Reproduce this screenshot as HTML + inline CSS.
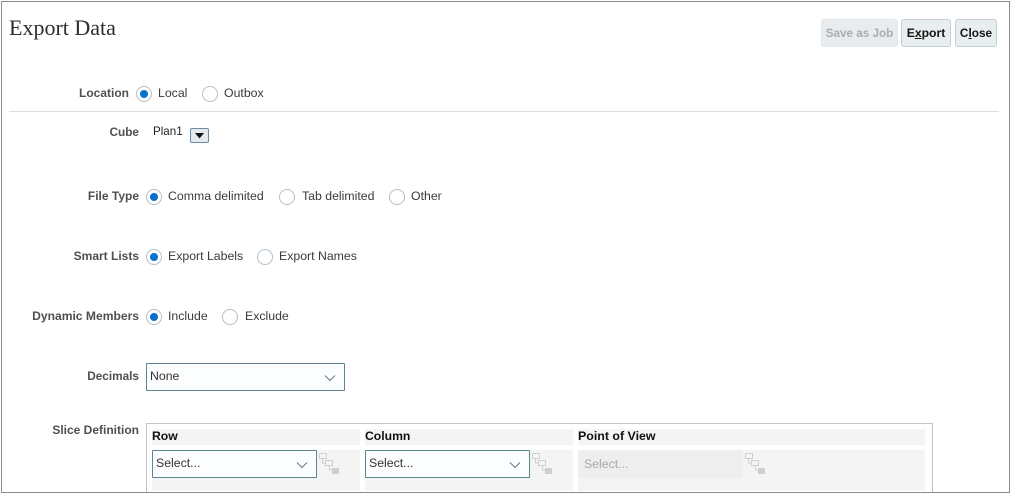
<!DOCTYPE html>
<html><head><meta charset="utf-8"><style>
html,body{margin:0;padding:0;background:#fff}
body{width:1011px;height:494px;position:relative;overflow:hidden;font-family:"Liberation Sans",sans-serif;font-size:12.3px;color:#3a3a3a}
.a{position:absolute;white-space:nowrap;line-height:16px}
.l{position:absolute;white-space:nowrap;line-height:16px;font-weight:bold;color:#4f4f4f;text-align:right;font-size:12px}
.r{position:absolute;width:14px;height:14px;border:1px solid #b3bfca;border-radius:50%;background:#fff}
.r.on::after{content:"";position:absolute;left:3px;top:3px;width:8px;height:8px;border-radius:50%;background:#0572ce}
.b{position:absolute;top:19px;height:26px;border:1px solid #c4ced7;border-radius:3px;background:#e8edf0;font-weight:bold;font-size:12px;line-height:26px;text-align:center;color:#161513;box-sizing:content-box}
.s{position:absolute;border:1px solid #5f8490;background:#fbfdfe;box-sizing:border-box;line-height:24px;padding-left:3px;color:#333;border-radius:1px}
.g{position:absolute;background:#f4f4f4}
.h{position:absolute;background:#f4f4f4;font-weight:bold;font-size:12.2px;line-height:14px;color:#111;height:16px;padding-left:0}
</style></head><body>
<div style="position:absolute;left:1px;top:1px;width:1007px;height:490px;border:1px solid #8c8c8c"></div>
<div class="a" style="left:9px;top:16px;font-family:'Liberation Serif',serif;font-size:22px;line-height:24px;color:#2f2d2b">Export Data</div>

<div class="b" style="left:821px;width:75px;background:#e8ecee;border-color:#e2e7ea;color:#a9adb0;font-size:11.7px;line-height:27px">Save as Job</div>
<div class="b" style="left:901px;width:48px;font-size:12.2px">E<u>x</u>port</div>
<div class="b" style="left:955px;width:40px;font-size:11.8px">C<u>l</u>ose</div>

<div class="l" style="right:882px;top:85px">Location</div>
<div class="r on" style="left:136px;top:86px"></div><div class="a" style="left:158px;top:85px">Local</div>
<div class="r" style="left:202px;top:86px"></div><div class="a" style="left:224px;top:85px">Outbox</div>
<div style="position:absolute;left:9px;top:111px;width:990px;height:1px;background:#d6dfe6"></div>

<div class="l" style="right:872px;top:124px;font-size:11.8px">Cube</div>
<div class="a" style="left:153px;top:124px;color:#222;font-size:11.6px">Plan1</div>
<div style="position:absolute;left:190px;top:128px;width:17px;height:13px;border:1px solid #6f8ba0;border-radius:2px;background:#e3e9ef"><svg width="17" height="13" style="display:block"><path d="M4 4h9l-4.500 5.500z" fill="#111"/></svg></div>

<div class="l" style="right:872px;top:188px">File Type</div>
<div class="r on" style="left:146px;top:189px"></div><div class="a" style="left:168px;top:188px">Comma delimited</div>
<div class="r" style="left:279px;top:189px"></div><div class="a" style="left:302px;top:188px">Tab delimited</div>
<div class="r" style="left:389px;top:189px"></div><div class="a" style="left:411px;top:188px">Other</div>

<div class="l" style="right:872px;top:248px">Smart Lists</div>
<div class="r on" style="left:146px;top:249px"></div><div class="a" style="left:168px;top:248px">Export Labels</div>
<div class="r" style="left:257px;top:249px"></div><div class="a" style="left:279px;top:248px">Export Names</div>

<div class="l" style="right:872px;top:308px;font-size:12.1px">Dynamic Members</div>
<div class="r on" style="left:146px;top:309px"></div><div class="a" style="left:168px;top:308px">Include</div>
<div class="r" style="left:222px;top:309px"></div><div class="a" style="left:245px;top:308px">Exclude</div>

<div class="l" style="right:872px;top:368px;font-size:11.8px">Decimals</div>
<div class="s" style="left:146px;top:363px;width:199px;height:28px">None</div>
<svg style="position:absolute;left:324px;top:374px" width="12" height="8"><path d="M1 1.500l5 5 5-5" fill="none" stroke="#6d7780" stroke-width="1"/></svg>

<div class="l" style="right:872px;top:422px">Slice Definition</div>
<div style="position:absolute;left:146px;top:423px;width:785px;height:68px;border:1px solid #c4c4c4;border-bottom:none"></div>

<div class="h" style="left:152px;top:429px;width:208px">Row</div>
<div class="g" style="left:152px;top:450px;width:208px;height:41px"></div>
<div class="s" style="left:152px;top:450px;width:165px;height:28px">Select...</div>
<svg style="position:absolute;left:296px;top:461px" width="12" height="8"><path d="M1 1.500l5 5 5-5" fill="none" stroke="#6d7780"/></svg>
<svg style="position:absolute;left:319px;top:453px" width="22" height="24"><g fill="none" stroke="#d0d0d0"><rect x="0.500" y="0.500" width="7" height="5"/><rect x="6.500" y="7.500" width="7" height="5"/><path d="M3.500 6v4h3M10.500 13v4h3"/></g><rect x="13" y="15" width="7" height="6" fill="#cfcfcf"/></svg>

<div class="h" style="left:365px;top:429px;width:208px">Column</div>
<div class="g" style="left:365px;top:450px;width:208px;height:41px"></div>
<div class="s" style="left:365px;top:450px;width:165px;height:28px">Select...</div>
<svg style="position:absolute;left:509px;top:461px" width="12" height="8"><path d="M1 1.500l5 5 5-5" fill="none" stroke="#6d7780"/></svg>
<svg style="position:absolute;left:532px;top:453px" width="22" height="24"><g fill="none" stroke="#d0d0d0"><rect x="0.500" y="0.500" width="7" height="5"/><rect x="6.500" y="7.500" width="7" height="5"/><path d="M3.500 6v4h3M10.500 13v4h3"/></g><rect x="13" y="15" width="7" height="6" fill="#cfcfcf"/></svg>

<div class="h" style="left:578px;top:429px;width:347px;font-size:12.4px">Point of View</div>
<div class="g" style="left:578px;top:450px;width:347px;height:41px"></div>
<div class="a" style="left:578px;top:450px;width:159px;height:28px;line-height:28px;background:#eeeeef;color:#a8a8a8;padding-left:6px">Select...</div>
<svg style="position:absolute;left:745px;top:453px" width="22" height="24"><g fill="none" stroke="#d0d0d0"><rect x="0.500" y="0.500" width="7" height="5"/><rect x="6.500" y="7.500" width="7" height="5"/><path d="M3.500 6v4h3M10.500 13v4h3"/></g><rect x="13" y="15" width="7" height="6" fill="#cfcfcf"/></svg>
</body></html>
